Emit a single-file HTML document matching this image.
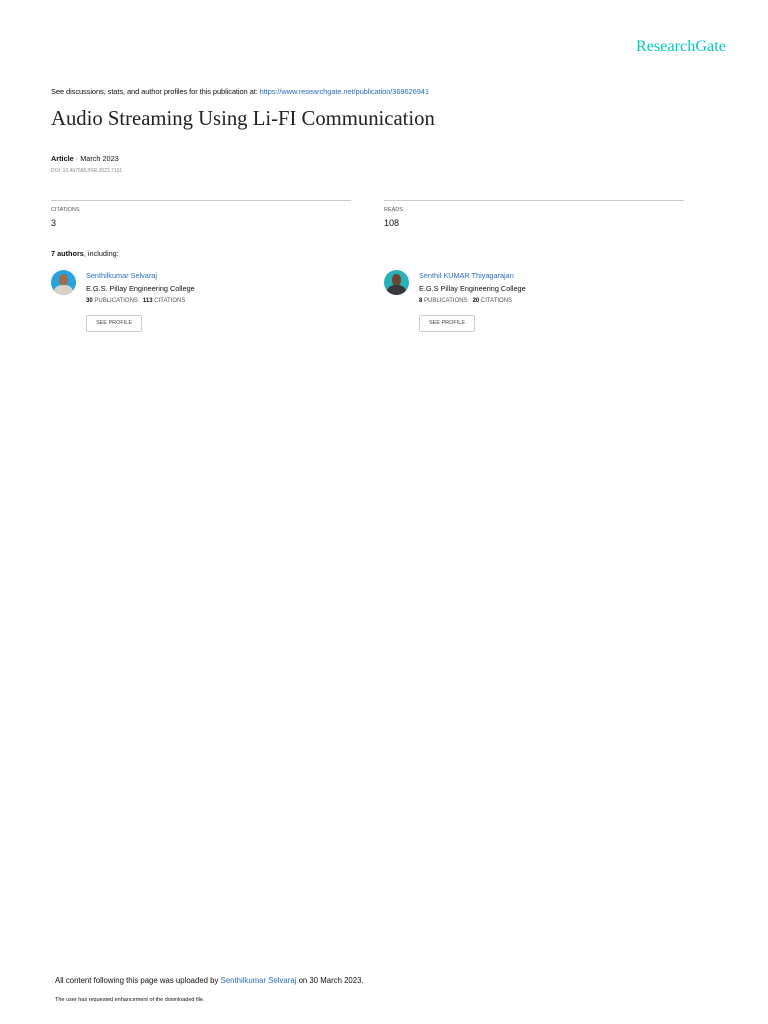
<!DOCTYPE html>
<html><head><meta charset="utf-8"><style>
body{margin:0;width:768px;height:1024px;background:#fff;position:relative;font-family:"Liberation Sans",sans-serif;color:#111;overflow:hidden}
.a{position:absolute;white-space:nowrap}
.lnk{color:#2a6ebb}
.hr{position:absolute;height:1px;background:#ccc}
.av{position:absolute;width:25px;height:25px;border-radius:50%;background:#27a4e0;overflow:hidden}
.av i{position:absolute;left:8px;top:4px;width:9px;height:12px;border-radius:45%;background:#9a6e4f}
.av b{position:absolute;left:3px;top:15px;width:19px;height:14px;border-radius:45% 45% 0 0;background:#d8d2c8}
.btn{position:absolute;width:54px;height:15px;border:1px solid #ccc;border-radius:2px;font-size:5.5px;color:#444;text-align:center;line-height:15px}
</style></head><body>
<div class="a" style="left:636px;top:37px;font-family:'Liberation Serif',serif;font-size:16.2px;color:#00ccbb">ResearchGate</div>
<div class="a" style="left:51px;top:87px;font-size:7.5px;letter-spacing:-0.1px">See discussions, stats, and author profiles for this publication at: <span class="lnk">https://www.researchgate.net/publication/369626941</span></div>
<div class="a" style="left:51px;top:108px;font-family:'Liberation Serif',serif;font-size:20.7px;color:#222">Audio Streaming Using Li-FI Communication</div>
<div class="a" style="left:51px;top:154px;font-size:7.3px"><b>Article</b> · March 2023</div>
<div class="a" style="left:51px;top:168px;font-size:5px;color:#888">DOI: 10.46758/IJISR.2023.7101</div>
<div class="hr" style="left:51px;top:200px;width:300px"></div>
<div class="hr" style="left:384px;top:200px;width:300px"></div>
<div class="a" style="left:51px;top:207px;font-size:5.5px;color:#555">CITATIONS</div>
<div class="a" style="left:51px;top:218px;font-size:9px">3</div>
<div class="a" style="left:384px;top:207px;font-size:5.5px;color:#555">READS</div>
<div class="a" style="left:384px;top:218px;font-size:9px">108</div>
<div class="a" style="left:51px;top:249px;font-size:7.3px"><b>7 authors</b>, including:</div>
<div class="av" style="left:51px;top:270px"><i></i><b></b></div>
<div class="a lnk" style="left:86px;top:271px;font-size:7.3px">Senthilkumar Selvaraj</div>
<div class="a" style="left:86px;top:284px;font-size:7.3px">E.G.S. Pillay Engineering College</div>
<div class="a" style="left:86px;top:298px;font-size:6px;color:#555"><b style="color:#111">30</b> PUBLICATIONS &nbsp; <b style="color:#111">113</b> CITATIONS</div>
<div class="btn" style="left:86px;top:315px">SEE PROFILE</div>
<div class="av" style="left:384px;top:270px;background:#2ab0b8"><i style="background:#6b4530"></i><b style="background:#3a3a3a"></b></div>
<div class="a lnk" style="left:419px;top:271px;font-size:7.3px">Senthil KUMAR Thiyagarajan</div>
<div class="a" style="left:419px;top:284px;font-size:7.3px">E.G.S Pillay Engineering College</div>
<div class="a" style="left:419px;top:298px;font-size:6px;color:#555"><b style="color:#111">8</b> PUBLICATIONS &nbsp; <b style="color:#111">20</b> CITATIONS</div>
<div class="btn" style="left:419px;top:315px">SEE PROFILE</div>
<div class="a" style="left:55px;top:976px;font-size:7.8px">All content following this page was uploaded by <span class="lnk">Senthilkumar Selvaraj</span> on 30 March 2023.</div>
<div class="a" style="left:55px;top:997px;font-size:5.5px">The user has requested enhancement of the downloaded file.</div>
</body></html>
